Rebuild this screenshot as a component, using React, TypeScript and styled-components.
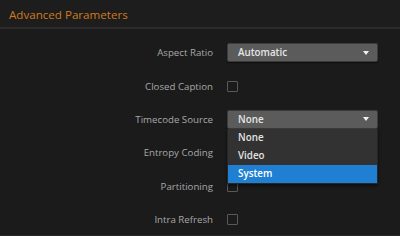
import React from "react";
import styled, { createGlobalStyle } from "styled-components";

const Global = createGlobalStyle`
  html, body { margin: 0; padding: 0; background: #1b1b1b; }
  body { font-family: "Open Sans", "DejaVu Sans", sans-serif; }
`;

const Panel = styled.div`
  width: 400px;
  height: 236px;
  box-sizing: border-box;
  background: #1b1b1b;
  border-bottom: 1px solid #2a2a2a;
  overflow: hidden;
`;

const Header = styled.div`
  height: 29px;
  box-sizing: border-box;
  border-bottom: 2px solid #2c2c2c;
  background: #1d1d1d;
  display: flex;
  align-items: center;
  padding-left: 9px;
  padding-top: 1px;
  color: #d07a1c;
  font-size: 11.6px;
`;

const Form = styled.div`
  display: grid;
  grid-template-columns: 213px 151px;
  grid-auto-rows: 33.4px;
  column-gap: 14px;
  padding-top: 7px;
`;

const Label = styled.div`
  display: flex;
  align-items: center;
  justify-content: flex-end;
  color: #a8a8a8;
  font-size: 9.7px;
`;

const Control = styled.div`
  position: relative;
  display: flex;
  align-items: center;
`;

const Select = styled.div`
  width: 151px;
  height: 19px;
  box-sizing: border-box;
  background: #5b5b5b;
  border: 1px solid #3c3c3c;
  border-radius: 2px;
  box-shadow: 0 1px 1px rgba(0, 0, 0, 0.5);
  display: flex;
  align-items: center;
  justify-content: space-between;
  padding: 0 8px 0 10px;
  color: #e6e6e6;
  font-size: 9.8px;
  font-weight: 600;
`;

const Caret = styled.span`
  width: 0;
  height: 0;
  border-left: 3.5px solid transparent;
  border-right: 3.5px solid transparent;
  border-top: 4px solid #f2f2f2;
`;

const Check = styled.span`
  width: 11px;
  height: 11px;
  box-sizing: border-box;
  border: 1px solid #595959;
  border-radius: 1px;
`;

const Menu = styled.div`
  position: absolute;
  left: 0;
  top: calc(50% + 9.5px);
  width: 151px;
  box-sizing: border-box;
  background: #323232;
  border: 1px solid #262626;
  border-top: none;
  box-shadow: 0 2px 3px rgba(0, 0, 0, 0.5);
  z-index: 2;
`;

const Item = styled.div<{ $active?: boolean }>`
  height: 18px;
  display: flex;
  align-items: center;
  padding-left: 10px;
  font-size: 9.8px;
  font-weight: 600;
  color: ${(p) => (p.$active ? "#ffffff" : "#e2e2e2")};
  background: ${(p) => (p.$active ? "#1f7fd2" : "transparent")};
`;

export default function App() {
  return (
    <Panel>
      <Global />
      <Header>Advanced Parameters</Header>
      <Form>
        <Label>Aspect Ratio</Label>
        <Control>
          <Select>
            Automatic
            <Caret />
          </Select>
        </Control>
        <Label>Closed Caption</Label>
        <Control>
          <Check />
        </Control>
        <Label>Timecode Source</Label>
        <Control>
          <Select>
            None
            <Caret />
          </Select>
          <Menu>
            <Item>None</Item>
            <Item>Video</Item>
            <Item $active>System</Item>
          </Menu>
        </Control>
        <Label>Entropy Coding</Label>
        <Control>
          <Check />
        </Control>
        <Label>Partitioning</Label>
        <Control>
          <Check />
        </Control>
        <Label>Intra Refresh</Label>
        <Control>
          <Check />
        </Control>
      </Form>
    </Panel>
  );
}
